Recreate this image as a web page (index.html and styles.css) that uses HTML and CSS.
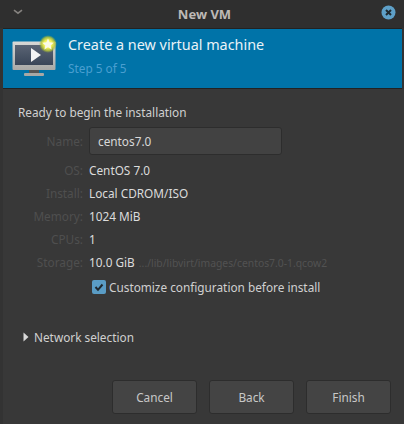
FILE: index.html
```html
<!DOCTYPE html>
<html lang="en">
<head>
<meta charset="utf-8">
<title>New VM</title>
<link rel="stylesheet" href="styles.css">
</head>
<body>
<div class="window">
  <header class="titlebar">
    <svg class="menu-icon" width="10" height="6" viewBox="0 0 10 6"><path d="M1 1.200 5 4.200 9 1.200" fill="none" stroke="#85827f" stroke-width="1.600"/></svg>
    <div class="title">New VM</div>
    <svg class="close-icon" width="15" height="15" viewBox="0 0 15 15"><circle cx="7.500" cy="7.500" r="7" fill="#5ea0c8"/><path d="M5 5 10 10M10 5 5 10" stroke="#1f2a30" stroke-width="2"/></svg>
  </header>
  <div class="content">
    <section class="banner">
      <svg class="banner-icon" width="48" height="44" viewBox="0 0 48 44">
        <defs>
          <radialGradient id="glow"><stop offset="0.45" stop-color="#f4f25a"/><stop offset="0.75" stop-color="#b9c53a" stop-opacity=".85"/><stop offset="1" stop-color="#8fae30" stop-opacity="0"/></radialGradient>
          <linearGradient id="screen" x1="0" y1="0" x2="0" y2="1"><stop offset="0" stop-color="#5a6474"/><stop offset="1" stop-color="#3a4658"/></linearGradient>
          <linearGradient id="frame" x1="0" y1="0" x2="0" y2="1"><stop offset="0" stop-color="#d8d8d6"/><stop offset="1" stop-color="#a9a9a6"/></linearGradient>
        </defs>
        <rect x=".5" y="6.500" width="43" height="28.500" rx="1" fill="url(#frame)"/>
        <rect x="3" y="10" width="38" height="20" fill="url(#screen)"/>
        <rect x="17" y="35" width="10" height="3" fill="#555"/>
        <rect x="12" y="38" width="20" height="3" rx="1" fill="#a8a8a5"/>
        <path d="M19 13 29 20 19 27Z" fill="#f4f4f4"/>
        <circle cx="36" cy="9" r="9" fill="url(#glow)"/>
        <path d="M36 3.500 37.700 7.300 41.700 7.700 38.700 10.400 39.600 14.400 36 12.300 32.400 14.400 33.300 10.400 30.300 7.700 34.300 7.300Z" fill="#fbfbe6"/>
      </svg>
      <div class="banner-text">
        <div class="banner-title">Create a new virtual machine</div>
        <div class="banner-step">Step 5 of 5</div>
      </div>
    </section>
    <div class="body">
      <p class="intro">Ready to begin the installation</p>
      <div class="details">
        <span class="key key-first">Name:</span><div class="entry">centos7.0</div>
        <span class="key">OS:</span><span class="val">CentOS 7.0</span>
        <span class="key">Install:</span><span class="val">Local CDROM/ISO</span>
        <span class="key">Memory:</span><span class="val">1024 MiB</span>
        <span class="key">CPUs:</span><span class="val">1</span>
        <span class="key">Storage:</span><span class="val">10.0 GiB <span class="path">.../lib/libvirt/images/centos7.0-1.qcow2</span></span>
      </div>
      <div class="check-row">
        <svg class="check" width="14" height="14" viewBox="0 0 14 14"><rect width="14" height="14" rx="2" fill="#5a9cc5"/><path d="M3.500 7 6 9.800 10.500 4.500" fill="none" stroke="#20282e" stroke-width="2"/></svg>
        <span>Customize configuration before install</span>
      </div>
      <div class="expander">
        <svg width="6" height="10" viewBox="0 0 6 10"><path d="M.5 .5 5.500 5 .5 9.500Z" fill="#d8d8d8"/></svg>
        <span>Network selection</span>
      </div>
      <div class="buttons">
        <button class="btn">Cancel</button>
        <button class="btn">Back</button>
        <button class="btn">Finish</button>
      </div>
    </div>
  </div>
</div>
</body>
</html>
```
FILE: styles.css
```css
* { box-sizing: border-box; }
html, body { margin: 0; padding: 0; }
body {
  width: 404px;
  height: 424px;
  overflow: hidden;
  background: #383838;
  font-family: "Noto Sans", "Open Sans", sans-serif;
  font-size: 11.8px;
  color: #d3d3d3;
}
.window { width: 404px; height: 424px; display: flex; flex-direction: column; }
.titlebar {
  height: 28px;
  flex: none;
  background: #2f2f2f;
  display: flex;
  align-items: center;
  justify-content: space-between;
  padding: 0 8px 1px 13px;
}
.title { font-size: 13px; font-weight: 700; color: #bdb9b6; margin-left: 5px; }
.menu-icon { margin-top: -4px; }
.close-icon { margin-top: -2px; }
.content { flex: 1; display: flex; flex-direction: column; padding: 0 2px 0 3px; background: #333; }
.banner {
  height: 61px;
  flex: none;
  background: #0073a8;
  border-bottom: 1px solid #222;
  border-top: 1px solid #222;
  display: flex;
  align-items: flex-start;
  padding: 6px 0 0 9px;
}
.banner-icon { flex: none; }
.banner-text { margin-left: 8px; }
.banner-title { font-size: 14.4px; line-height: 19px; color: #e9f2f7; }
.banner-step { font-size: 11.8px; line-height: 16px; margin-top: 6px; color: #4a9fd0; }
.body { flex: 1; background: #383838; margin: 0 -2px 0 0; padding: 8px 0 0 15px; display: flex; flex-direction: column; }
.intro { margin: 7px 0 0; font-size: 11.8px; line-height: 17px; color: #d0d0d0; }
.details {
  display: grid;
  grid-template-columns: 65px 1fr;
  column-gap: 6px;
  align-items: center;
  margin-top: 6px;
  grid-template-rows: 31.500px 23px 23px 23px 23px 23px;
}
.key { text-align: right; color: #4f4f4f; }
.key-first { align-self: start; line-height: 28px; }
.entry {
  align-self: start;
  width: 193px;
  height: 28px;
  background: #424242;
  border: 1px solid #2d2d2d;
  border-radius: 3px;
  padding: 0 8px;
  line-height: 26px;
  color: #d8d8d8;
}
.val { color: #dcdcdc; white-space: nowrap; }
.path { font-size: 10.35px; color: #525252; margin-left: 1px; }
.check-row { display: flex; align-items: center; gap: 3px; margin: 3px 0 0 74px; height: 20px; color: #d0d0d0; }
.expander { display: flex; align-items: center; gap: 5px; margin: 31px 0 0 5px; height: 18px; color: #d0d0d0; }
.buttons { display: flex; gap: 12px; margin: 34px 0 0 94px; }
.btn {
  width: 85px;
  height: 34px;
  background: #444;
  border: 1px solid #2d2d2d;
  border-radius: 3px;
  font: inherit;
  color: #c8c8c8;
  padding: 0;
}
```
